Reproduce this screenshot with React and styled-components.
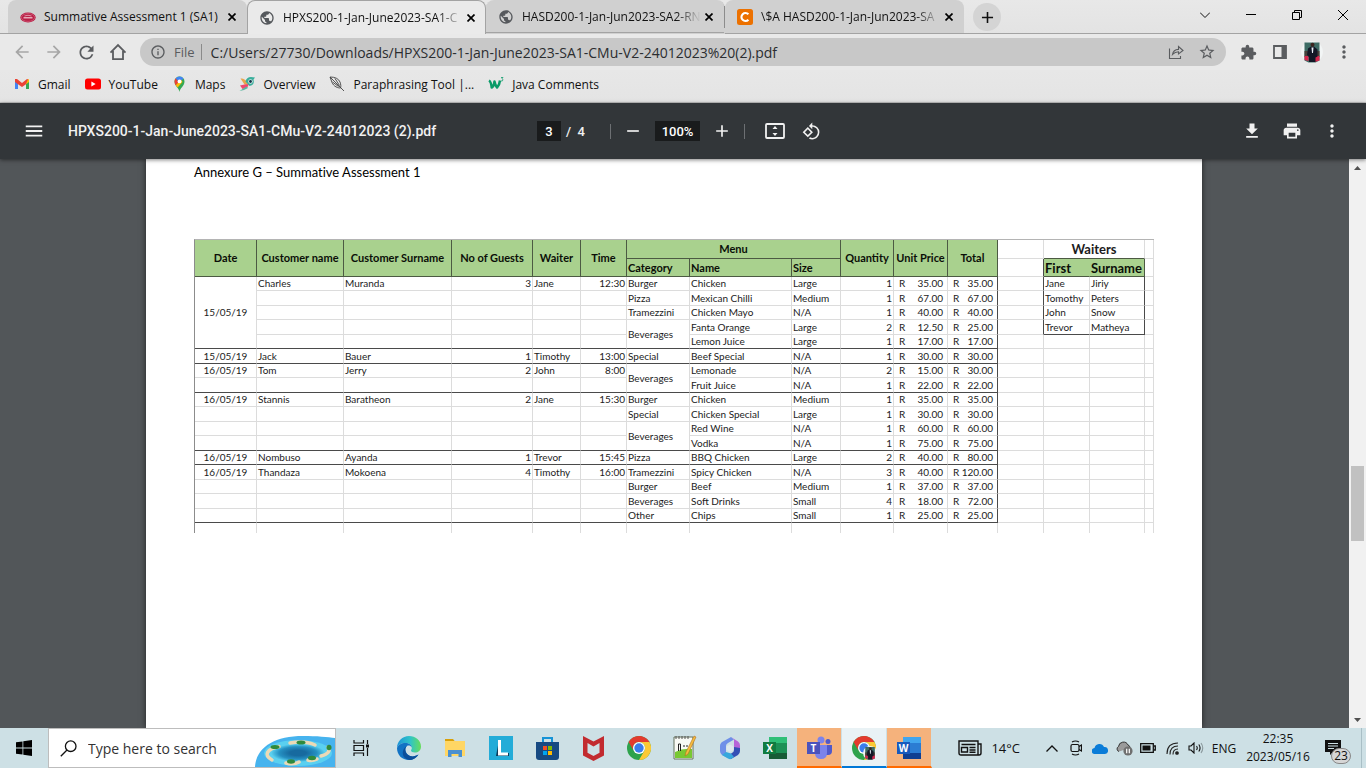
import React from 'react';
import styled, { createGlobalStyle, css } from 'styled-components';
import {
  MdAdd,
  MdArrowBack,
  MdArrowForward,
  MdExtension,
  MdFileDownload,
  MdInfoOutline,
  MdMenu,
  MdMoreVert,
  MdPrint,
  MdPublic,
  MdRefresh,
  MdRemove,
  MdRotate90DegreesCcw,
  MdStarBorder,
} from 'react-icons/md';

const GlobalStyle = createGlobalStyle`
  * {
    box-sizing: border-box;
  }

  body {
    margin: 0;
    font-family: "Open Sans", "Noto Sans", sans-serif;
    font-size: 12px;
    color: #111;
  }

  button {
    border: 0;
    padding: 0;
    background: none;
    color: inherit;
    font: inherit;
  }

  a {
    color: inherit;
    text-decoration: none;
  }

  svg {
    display: block;
    flex-shrink: 0;
  }
`;

const Desktop = styled.div`
  display: flex;
  flex-direction: column;
  height: 100vh;
  overflow: hidden;
`;

/* ---------- browser ---------- */

const TabStrip = styled.div`
  display: flex;
  height: 34px;
  padding-left: 8px;
  background: linear-gradient(#e8e8e8, #e3e3e3);
  box-shadow: inset 0 -1px 0 #a3a3a3;
`;

const Tab = styled.div`
  display: flex;
  align-items: center;
  flex: 0 1 239px;
  min-width: 0;
  height: 34px;
  padding: 0 7px 0 12px;
  background: #d0d0d0;
  border-bottom: 1px solid #a3a3a3;
  border-radius: 8px 8px 0 0;

  ${props => props.$divider && css`
    border-right: 1px solid #8c8c8c;
    border-image: linear-gradient(transparent 20%, #8c8c8c 20%, #8c8c8c 80%, transparent 80%) 1;
    border-image-width: 0 1px 0 0;
    box-shadow: inset 0 -1px 0 #a3a3a3;
  `}

  ${props => props.$active && css`
    padding: 0 6px 0 11px;
    background: #eaeaea;
    border: 1px solid #a3a3a3;
    border-bottom: 0;
  `}
`;

const TabTitle = styled.span`
  flex: 1;
  margin-left: 8px;
  white-space: nowrap;
  mask-image: ${props => (props.$fade ? 'linear-gradient(to right, #000 86%, transparent 100%)' : 'none')};
`;

const TabClose = styled.button`
  display: flex;
  align-items: center;
  justify-content: center;
  width: 16px;
  height: 16px;
`;

const NewTab = styled.button`
  display: flex;
  align-items: center;
  justify-content: center;
  width: 28px;
  height: 28px;
  margin: 3px 0 0 9px;
  border-radius: 50%;
  background: #d4d4d4;
`;

const WindowControls = styled.div`
  display: flex;
  margin-left: auto;
`;

const WindowButton = styled.button`
  display: flex;
  align-items: center;
  justify-content: center;
  width: 46px;
  height: 29px;
`;

const NavBar = styled.div`
  display: flex;
  align-items: center;
  height: 36px;
  padding: 0 6px;
  background: #e9e9e9;
`;

const NavButton = styled.button`
  display: flex;
  align-items: center;
  justify-content: center;
  width: 32px;
  height: 32px;
  color: ${props => (props.disabled ? '#a6a6a6' : '#5a5c5f')};
`;

const AddressBar = styled.div`
  display: flex;
  align-items: center;
  flex: 1;
  height: 28px;
  margin: 0 6px;
  padding: 0 10px;
  border-radius: 14px;
  background: #c8c8c8;
  color: #5a5c5f;
  font-size: 14px;
`;

const Scheme = styled.span`
  margin-left: 8px;
  padding-right: 6px;
  border-right: 1px solid #8a8a8a;
  font-size: 13px;
  line-height: 16px;
`;

const AddressInput = styled.input`
  flex: 1;
  border: 0;
  padding: 0 9px;
  outline: 0;
  background: none;
  color: #2b2d30;
  font: inherit;
`;

const AddressButton = styled.button`
  display: flex;
  margin-left: 14px;
`;

const Bookmarks = styled.nav`
  display: flex;
  align-items: center;
  gap: 14px;
  height: 33px;
  padding: 0 14px 4px;
  background: linear-gradient(#e7e7e7, #e4e4e4);
  border-bottom: 1px solid #c4c4c4;
`;

const Bookmark = styled.a`
  display: flex;
  align-items: center;
  gap: 8px;
  white-space: nowrap;
`;

/* ---------- pdf viewer ---------- */

const PdfToolbar = styled.div`
  position: relative;
  z-index: 1;
  display: grid;
  grid-template-columns: 1fr auto 1fr;
  align-items: center;
  height: 56px;
  background: #323639;
  color: #f1f1f1;
  box-shadow: 0 1px 4px rgba(0, 0, 0, 0.5);
  font-family: Roboto, sans-serif;
  font-size: 14px;
  font-weight: 500;
`;

const ToolbarStart = styled.div`
  display: flex;
  align-items: center;
  gap: 22px;
  padding-left: 22px;
`;

const ToolbarCenter = styled.div`
  display: flex;
  align-items: center;
`;

const ToolbarEnd = styled.div`
  display: flex;
  justify-content: flex-end;
  gap: 16px;
  padding-right: 22px;
`;

const PdfTitle = styled.span`
  white-space: nowrap;
`;

const ToolButton = styled.button`
  display: flex;
  align-items: center;
  justify-content: center;
  width: 24px;
  height: 24px;
`;

const ToolInput = styled.input`
  width: ${props => (props.$wide ? '45px' : '24px')};
  height: 20px;
  border: 0;
  padding: 0;
  background: #191b1c;
  color: #fff;
  font: inherit;
  font-size: 13px;
  text-align: center;
`;

const PageCount = styled.span`
  width: 49px;
  padding-left: 5px;
  font-size: 13px;
  white-space: pre;
`;

const ToolDivider = styled.span`
  width: 1px;
  height: 15px;
  background: #6d7073;
`;

const ToolGroup = styled.div`
  display: flex;
  align-items: center;
  gap: 10px;
  padding: 0 10px;
`;

const ViewGroup = styled(ToolGroup)`
  gap: 12px;
  padding: 0 6px 0 18px;
`;

const Viewer = styled.main`
  display: flex;
  flex: 1;
  min-height: 0;
  background: #525659;
`;

const PageArea = styled.div`
  display: flex;
  justify-content: center;
  flex: 1;
  min-width: 0;
  padding-right: 1px;
`;

const PdfPage = styled.article`
  flex: 0 1 1056px;
  padding: 4px 48px 0;
  background: #fff;
  box-shadow: 0 0 6px rgba(0, 0, 0, 0.6);
`;

const PageHeading = styled.h1`
  margin: 0 0 58px;
  font: 400 13px/18px Lato, sans-serif;
  font-variant-ligatures: none;
  color: #000;
`;

const ScrollRail = styled.div`
  display: flex;
  flex-direction: column;
  width: 17px;
  background: #f1f1f1;
`;

const ScrollArrow = styled.button`
  display: flex;
  align-items: center;
  justify-content: center;
  height: 17px;
  color: #505050;
`;

const ScrollSpace = styled.div`
  flex: ${props => props.$grow};
`;

const ScrollThumb = styled.div`
  flex: 75;
  margin: 0 2px;
  background: #c1c1c1;
`;

/* ---------- spreadsheet ---------- */

const Sheet = styled.table`
  width: 100%;
  table-layout: fixed;
  border-collapse: separate;
  border-spacing: 0;
  border-top: 1px solid #b4b4b4;
  border-left: 1px solid #8c8c8c;
  font: 400 10px/12px Lato, sans-serif;
  color: #1c1c1c;
`;

const HeadRow = styled.tr`
  height: ${props => (props.$first ? '19px' : '18px')};
`;

const Row = styled.tr`
  height: 14px;

  &:nth-child(even) {
    height: 15px;
  }

  &:last-child {
    height: 10px;
  }
`;

const HeadCell = styled.th`
  padding: 0 1px;
  background: #a9d18e;
  border-right: 1px solid ${props => (props.$open ? '#a9d18e' : '#4c5a43')};
  border-bottom: 1px solid #4c5a43;
  color: #0b0f08;
  font-size: ${props => (props.$large ? '13px' : '11px')};
  text-align: ${props => props.$align || 'center'};
  white-space: nowrap;
`;

const WaitersTitle = styled.th`
  padding: 0;
  border-bottom: 1px solid #4c5a43;
  border-right: 1px solid #dcdcdc;
  font-size: 13px;
`;

const Cell = styled.td`
  padding: 0 1px 1px;
  border-right: 1px solid ${props => (props.$edge ? '#4a4a4a' : '#dcdcdc')};
  border-bottom: 1px solid ${props => (props.$end ? '#4a4a4a' : '#dcdcdc')};
  text-align: ${props => props.$align || 'left'};
  white-space: nowrap;
`;

const FooterCell = styled(Cell)`
  border-bottom: 0;
`;

const Money = styled.span`
  display: flex;
  justify-content: space-between;
  padding: 0 3px 0 4px;
`;

/* ---------- taskbar ---------- */

const Taskbar = styled.footer`
  display: flex;
  align-items: stretch;
  height: 40px;
  background: #cde0e5;
`;

const StartButton = styled.button`
  display: flex;
  align-items: center;
  justify-content: center;
  width: 48px;
`;

const Search = styled.label`
  display: flex;
  align-items: center;
  gap: 11px;
  width: 288px;
  padding-left: 11px;
  border: 1px solid #bdbdbd;
  background: #fff;
`;

const SearchInput = styled.input`
  flex: 1;
  min-width: 0;
  border: 0;
  padding: 0;
  outline: 0;
  background: none;
  font: inherit;
  font-size: 14px;

  &::placeholder {
    color: #333;
    opacity: 1;
  }
`;

const IslandBox = styled.span`
  align-self: flex-end;
`;

const TaskButton = styled.button`
  display: flex;
  align-items: center;
  justify-content: center;
  width: ${props => props.$width || 46}px;
  border-bottom: 3px solid transparent;
  border-top: 3px solid transparent;

  ${props => props.$state && css`
    border: 0;
    border-right: 1px solid #cde0e5;
    padding-top: 2px;
    background: ${props.$state === 'alert' ? '#f5b27c' : '#e9f2f5'};
    border-bottom: 2px solid ${props.$state === 'alert' ? '#ff6a00' : '#0078d7'};
  `}
`;

const Tray = styled.div`
  display: flex;
  align-items: center;
  margin-left: auto;
`;

const TrayButton = styled.button`
  display: flex;
  align-items: center;
  justify-content: center;
  width: ${props => props.$width || 24}px;
  height: 40px;
`;

const Weather = styled(TrayButton)`
  gap: 9px;
  width: auto;
  margin-right: 20px;
  font-size: 13px;
`;

const Clock = styled.time`
  width: 76px;
  line-height: 18px;
  text-align: center;
`;

const NoticeButton = styled.button`
  position: relative;
  display: flex;
  align-items: center;
  width: 46px;
  height: 40px;
  margin-right: 4px;
  padding-left: 9px;
  border-right: 1px solid #a9bfc6;
`;

const NoticeCount = styled.span`
  position: absolute;
  right: 10px;
  bottom: 4px;
  width: 20px;
  height: 16px;
  border: 1px solid #888;
  border-radius: 8px;
  background: #d6d6d6;
  font-size: 12px;
  line-height: 14px;
  text-align: center;
`;

/* ---------- drawings ---------- */

const CloseIcon = () => (
  <svg width="8" height="8" viewBox="0 0 8 8" fill="none" stroke="#000" strokeWidth="1.7">
    <path d="m.5.500 7 7M7.500.500l-7 7" />
  </svg>
);

const Crest = () => (
  <svg width="16" height="16" viewBox="0 0 16 16">
    <ellipse cx="8" cy="8.500" rx="7.700" ry="4.900" fill="#b81e45" />
    <ellipse cx="8" cy="8.500" rx="6.600" ry="3.900" fill="none" stroke="#d6708a" strokeWidth=".6" />
    <path d="M4.500 7q3.500-1.500 7 0" fill="none" stroke="#e8b5c1" strokeWidth=".8" />
    <path d="M3.500 8.800h9" stroke="#f3ccd5" strokeWidth="1.200" />
  </svg>
);

const OrangeC = () => (
  <svg width="16" height="16" viewBox="0 0 16 16">
    <rect width="16" height="16" rx="2.500" fill="#ec7100" />
    <path d="M11.400 5.300A4 4 0 1 0 11.400 10.700" fill="none" stroke="#fff" strokeWidth="2.100" />
  </svg>
);

const HomeIcon = () => (
  <svg width="18" height="18" viewBox="0 0 18 18" fill="none" stroke="currentColor" strokeWidth="1.800">
    <path d="M1.500 9.600 9 2l7.500 7.600M4 8v8.100h10V8" />
  </svg>
);

const ShareIcon = () => (
  <svg width="16" height="16" viewBox="0 0 16 16" fill="none" stroke="currentColor" strokeWidth="1.100">
    <path d="M1.500 4.500V14.500H12.500V12M4.500 10.500C5 7.500 7 5.500 10.500 5.400V2.500L15 6.500 10.500 10V7.700C7.800 7.700 6 8.800 4.500 10.500Z" />
  </svg>
);

const SidePanelIcon = () => (
  <svg width="14" height="14" viewBox="0 0 14 14">
    <path d="M1 1h12v12H1z" fill="none" stroke="currentColor" strokeWidth="1.800" />
    <path d="M8.500 1H13v12H8.500z" fill="currentColor" />
  </svg>
);

const Avatar = ({ size = 22 }) => (
  <svg width={size} height={size} viewBox="0 0 22 22">
    <circle cx="11" cy="11" r="10.900" fill="#f2f5f5" />
    <path d="M3.500 1.500h15v18l-4 2h-7l-4-2z" fill="#3d6b64" />
    <path d="M3.500 10h15v6h-15z" fill="#47413a" />
    <path d="M3.500 15h4v5l-4-1zM14 15h4.500v4.500L14 21z" fill="#d6274e" />
    <path d="M7 7.500 10 5.500h3l3.500 3v7l-2 1V21H8v-5l-2-2z" fill="#131826" />
    <circle cx="11.500" cy="3.800" r="2" fill="#3c2520" />
    <path d="M10.500 6.500h2l-.5 5.500h-1z" fill="#e8edf5" />
  </svg>
);

const GmailIcon = () => (
  <svg width="16" height="16" viewBox="0 0 16 16">
    <path d="M1 4v9h3V6z" fill="#4285f4" />
    <path d="M12 6v7h3V4z" fill="#34a853" />
    <path d="M12 4.500 15 3v3l-3 2.200z" fill="#fbbc04" />
    <path d="M1 3h2l5 4 5-4 1 0-2 5.200L8 11 4 8.200 1 6z" fill="#ea4335" />
  </svg>
);

const YouTubeIcon = () => (
  <svg width="16" height="16" viewBox="0 0 16 16">
    <rect y="2.500" width="16" height="11" rx="2.500" fill="#f00" />
    <path d="M6.400 5.500v5l4.200-2.500z" fill="#fff" />
  </svg>
);

const MapsIcon = () => (
  <svg width="15" height="16" viewBox="0 0 15 16">
    <path d="M7.500 16C7 12 2.500 10 2.500 5.500a5 5 0 0 1 10 0C12.500 10 8 12 7.500 16z" fill="#34a853" />
    <path d="M3.700 2.300 7 5.800 4 9.500A6 6 0 0 1 2.500 5.500c0-1.200.4-2.300 1.200-3.200z" fill="#ea4335" />
    <path d="M3.700 2.300A5 5 0 0 1 11.500 2.500L7.500 7z" fill="#4285f4" />
    <path d="M3.800 9.300 9 3.500 10.500 6 5.600 11.600z" fill="#fbbc04" />
    <circle cx="7.500" cy="5.400" r="1.900" fill="#fff" />
  </svg>
);

const BirdIcon = () => (
  <svg width="16" height="16" viewBox="0 0 16 16">
    <path d="M1.500 2.500C5 2.500 8 4 9 9L5.500 8.500z" fill="#e9a64c" />
    <path d="M1 9.500c3-1 6-1.500 9-1.500l-2 4-4.500 1z" fill="#ef476f" />
    <path d="M6.500 5.500Q7.500 1 12 1l4 .5-1.500 2Q16 9 10.500 10z" fill="#3aaf9c" />
    <circle cx="11.500" cy="5.500" r="2.200" fill="#dfe9ec" />
    <circle cx="11.500" cy="5.500" r="1.400" fill="#14364a" />
    <path d="m.5 15 7-4.500 1.500 1.500-4 2z" fill="#57b8a0" />
  </svg>
);

const QuillIcon = () => (
  <svg width="16" height="16" viewBox="0 0 16 16" fill="none" stroke="#444" strokeWidth=".9">
    <path d="M1 1c5 0 8.500 1.500 10 5 1 2.500 1 5 .5 6C7 12 3.500 9 2.500 5zM1 1l14 14M6 2.500l4.500 7M3.500 6l6 4.500" />
  </svg>
);

const W3Icon = () => (
  <svg width="16" height="16" viewBox="0 0 16 16">
    <path d="M1 4.500q2 1 2.700 7 2.200-1 2.800-6 .8 4 2.500 6 2.500-2.500 3-7" fill="none" stroke="#0a9b68" strokeWidth="2.500" strokeLinejoin="round" />
    <path d="M13 1.500h2L14 2.800Q15.500 3.600 14.500 4.800 13.600 5.300 13 4.600" fill="none" stroke="#0a9b68" strokeWidth=".8" />
  </svg>
);

const FitPageIcon = () => (
  <svg width="20" height="16" viewBox="0 0 20 16">
    <rect x="1" y="1" width="18" height="14" rx="1" fill="none" stroke="currentColor" strokeWidth="1.800" />
    <path d="m10 3-2.500 3h5zM10 13l-2.500-3h5z" fill="currentColor" />
  </svg>
);

const Triangle = ({ down }) => (
  <svg width="7" height="4" viewBox="0 0 7 4">
    <path d={down ? 'M0 0h7L3.500 4z' : 'M0 4h7L3.500 0z'} fill="currentColor" />
  </svg>
);

const WindowsLogo = () => (
  <svg width="16" height="16" viewBox="0 0 16 16">
    <path d="M0 2.300 6.500 1.400V7.600H0zM7.300 1.300 16 0v7.600H7.300zM0 8.400h6.500v6.200L0 13.700zM7.300 8.400H16V16l-8.700-1.300z" />
  </svg>
);

const SearchIcon = () => (
  <svg width="17" height="17" viewBox="0 0 17 17" fill="none" stroke="#111" strokeWidth="1.300">
    <circle cx="10.700" cy="6.200" r="5.300" />
    <path d="M7 10 .8 16.200" />
  </svg>
);

const Island = () => (
  <svg width="80" height="31" viewBox="0 0 80 31">
    <defs>
      <radialGradient id="lagoon">
        <stop offset="0.300" stopColor="#176a9f" />
        <stop offset="0.700" stopColor="#2590c2" />
        <stop offset="1" stopColor="#5ad0f0" />
      </radialGradient>
    </defs>
    <path d="M0 31C1 11 20 0 48 0c14 0 25 1 32 2v29z" fill="#46b3ee" />
    <ellipse cx="43" cy="17" rx="34" ry="13" fill="#5ad0f0" />
    <ellipse cx="43" cy="17" rx="27" ry="9" fill="url(#lagoon)" />
    <g fill="none" stroke="#ecd9b6" strokeWidth="3.500" strokeLinecap="round">
      <path d="M24 10.500C12 13 8 19 17 24" />
      <path d="M35 7q15-2.500 25 2" />
      <path d="M73 11q4 6-7 9" />
      <path d="M31 27q8 2 13-1" />
      <path d="M53 24q4 1.500 9-1" />
    </g>
    <g fill="#2f8a3d">
      <ellipse cx="20" cy="11" rx="4.500" ry="2" />
      <ellipse cx="46" cy="6.500" rx="4.500" ry="2" />
      <ellipse cx="74" cy="11.500" rx="2.500" ry="2.800" />
      <ellipse cx="36" cy="25.500" rx="4" ry="2.200" />
      <ellipse cx="57" cy="22" rx="4" ry="2.200" />
    </g>
  </svg>
);

const TaskViewIcon = () => (
  <svg width="17" height="16" viewBox="0 0 17 16" fill="none" stroke="#111" strokeWidth="1.200">
    <path d="M1 0v3h9.500V0M1 16v-3h9.500v3M1 5.500h9.500v5H1zM14.500 0v4M14.500 8v8" />
    <path d="M13 4.500h3v3h-3z" fill="#111" stroke="none" />
  </svg>
);

const EdgeIcon = () => (
  <svg width="24" height="24" viewBox="0 0 24 24">
    <defs>
      <linearGradient id="edgeTop" x1="0" x2="1">
        <stop offset="0" stopColor="#1c93d8" />
        <stop offset="0.550" stopColor="#2fc4c8" />
        <stop offset="1" stopColor="#67dd5b" />
      </linearGradient>
    </defs>
    <path d="M0 12C0 5 5.500 0 12 0s12 4.500 12 10.500c0 4-3 6-6 6-2.500 0-4-1-4-2 0-.8.800-1 .800-2.500C14.800 9 12 7 8.500 7 4 7 1 9 0 12z" fill="url(#edgeTop)" />
    <path d="M0 12c1-3 4-5 8.500-5 3.500 0 6 2 6.300 4.500C13.500 9.500 11.500 9 10 10c-3 2-2 8 3 10 3 1 6 0 8.500-1.500C19 22.500 15 24 12 24 5 24 0 19 0 12z" fill="#1273c4" />
    <path d="M10 10c-3 2-2 8 3 10 3 1 6 0 8.500-1.500C19.500 22 16 24 12.500 24 7 23 5 19 6 15c.500-2 2-4.500 4-5z" fill="#0b4f9b" />
  </svg>
);

const FolderIcon = () => (
  <svg width="22" height="20" viewBox="0 0 22 20">
    <path d="M1 1h8l2 2.500H1z" fill="#d9a009" />
    <path d="M1 3h20v15H1z" fill="#ffd664" />
    <path d="M4 12h14v7h-3.500v-3h-7v3H4z" fill="#4a90d0" />
  </svg>
);

const LIcon = () => (
  <svg width="24" height="24" viewBox="0 0 24 24">
    <path d="M0 0h24v24H0z" fill="#23acd8" />
    <path d="M7 20 10 4v13h10v3z" fill="#0b3b5a" />
    <path d="M10.500 4v14h8.500" fill="none" stroke="#fff" strokeWidth="3" />
  </svg>
);

const StoreIcon = () => (
  <svg width="23" height="25" viewBox="0 0 23 25">
    <path d="M7 7V2h9v5" fill="none" stroke="#1793d6" strokeWidth="2" />
    <path d="M0 6h23v15q0 3-3 3H3q-3 0-3-3z" fill="#174a82" />
    <path d="M7 10h4v4H7z" fill="#f25022" />
    <path d="M12 10h4v4h-4z" fill="#7fba00" />
    <path d="M7 15h4v4H7z" fill="#00a4ef" />
    <path d="M12 15h4v4h-4z" fill="#ffb900" />
  </svg>
);

const ShieldIcon = () => (
  <svg width="21" height="25" viewBox="0 0 21 25">
    <path d="M0 0 10.500 5.500 21 0v19.500L10.500 25 0 19.500zM4.500 7v9.800l6 3.200 6-3.200V7l-6 3.500z" fill="#c22b2f" fillRule="evenodd" />
  </svg>
);

const ChromeIcon = ({ children }) => (
  <svg width="24" height="24" viewBox="0 0 24 24">
    <circle cx="12" cy="12" r="12" fill="#2ea24c" />
    <path d="M12 0c4.500 0 8.300 2.400 10.400 6H12a6 6 0 0 0-5.200 9L1.600 6A12 12 0 0 1 12 0z" fill="#e33b2e" />
    <path d="M22.400 6A12 12 0 0 1 12 24l5.200-9A6 6 0 0 0 12 6z" fill="#fcc934" />
    <circle cx="12" cy="12" r="6" fill="#fff" />
    <circle cx="12" cy="12" r="4.700" fill="#3b7ded" />
    {children}
  </svg>
);

const NotepadIcon = () => (
  <svg width="24" height="26" viewBox="0 0 24 26">
    <path d="M1 2h19v22H1z" fill="#f7f9f4" stroke="#65735c" />
    <path d="M2 17q8-4 17-3v9H2z" fill="#78c832" />
    <path d="M3 1v3m3-3v3m3-3v3m3-3v3m3-3v3" stroke="#555" />
    <path d="M5.500 16V9h2v7M10 11h2M13 11h2" fill="none" stroke="#222" />
    <path d="m21 1 2 1-8 17-3 2 1-4z" fill="#f5bd3f" stroke="#b06d20" strokeWidth=".6" />
  </svg>
);

const Office365Icon = () => (
  <svg width="22" height="24" viewBox="0 0 22 24">
    <path d="M12 1 4 5.500Q1 7 1 10v5q0 2.500 2 4l4 2V10q0-2 2-3l6-3.500z" fill="#6e8fe8" />
    <path d="m12 1 7 4.500q2 1.500 2 4V15l-6-3.500V3.500z" fill="#b765d8" />
    <path d="M21 12v3q0 2.500-2 4l-7 4-5-2.500 6-3.500q2-1 2-3v-3z" fill="#3550b5" />
    <path d="m3 19 4-3 5 1.500 3 3.500-3 2q-2 .5-4-1z" fill="#38a7dc" />
    <path d="M11 8.500 14.500 10.500v3.500L11 16l-3.500-2v-3.500z" fill="#dde8ee" />
  </svg>
);

const OfficeTile = ({ letter, colors }) => (
  <svg width="24" height="24" viewBox="0 0 24 24">
    <path d="M6 1h18v22H6z" fill={colors[1]} />
    <path d="M6 1h18v6H6z" fill={colors[0]} />
    <path d="M6 17h18v6H6z" fill={colors[2]} />
    <path d="M0 6h13v12H0z" fill={colors[3]} />
    <text x="6.500" y="15.500" fill="#fff" fontFamily="Open Sans, sans-serif" fontSize="10" fontWeight="700" textAnchor="middle">
      {letter}
    </text>
  </svg>
);

const TeamsIcon = () => (
  <svg width="25" height="24" viewBox="0 0 25 24">
    <circle cx="14" cy="4" r="3.500" fill="#7b83eb" />
    <circle cx="21" cy="5.500" r="2.500" fill="#5059c9" />
    <path d="M17 9h8v6q0 4-4 4h-4z" fill="#5059c9" />
    <path d="M8 9h12v8q0 6-6 6t-6-6z" fill="#7b83eb" />
    <path d="M0 6h13v12H0z" fill="#4b53bc" />
    <text x="6.500" y="15.500" fill="#fff" fontFamily="Open Sans, sans-serif" fontSize="10" fontWeight="700" textAnchor="middle">
      T
    </text>
  </svg>
);

const NewsIcon = () => (
  <svg width="24" height="16" viewBox="0 0 24 16" fill="none" stroke="#111" strokeWidth="1.400">
    <path d="M1 1h19v14H3q-2 0-2-2zM20 4h3v9q0 2-2 2h-1M3.500 4.500h14M3.500 7.500h6v4.500h-6zM11.500 7.500h6M11.500 10h6M11.500 12.300h6" />
  </svg>
);

const TrayUp = () => (
  <svg width="12" height="7" viewBox="0 0 12 7" fill="none" stroke="#111" strokeWidth="1.300">
    <path d="m.5 6.500 5.500-5.500 5.500 5.500" />
  </svg>
);

const MeetIcon = () => (
  <svg width="12" height="16" viewBox="0 0 12 16" fill="none" stroke="#111" strokeWidth="1.200">
    <path d="M2 2q3.500-2 7 0M2 14q3.500 2 7 0M9 6.500l2.500-1.500v6L9 9.500" />
    <rect x="1" y="4.500" width="8" height="7" rx="1.500" />
  </svg>
);

const CloudIcon = () => (
  <svg width="16" height="11" viewBox="0 0 16 11">
    <path d="M3 11a3 3 0 0 1-.5-6A5 5 0 0 1 12 4a3.500 3.500 0 0 1 1 7z" fill="#0a7cd8" />
  </svg>
);

const CloudPausedIcon = () => (
  <svg width="17" height="15" viewBox="0 0 17 15">
    <path d="M3 10.500a2.700 2.700 0 0 1-.5-5A5 5 0 0 1 12 4a3 3 0 0 1 2 3" fill="#9a9a9a" stroke="#333" />
    <circle cx="12" cy="10" r="4.600" fill="#6f6f6f" />
    <path d="M10.700 7.800v4.400M13.300 7.800v4.400" stroke="#fff" strokeWidth="1.200" />
  </svg>
);

const BatteryIcon = () => (
  <svg width="16" height="10" viewBox="0 0 16 10">
    <path d="M.7.700h12.600v8.600H.7zM14 3h1.300v4H14" fill="none" stroke="#111" strokeWidth="1.300" />
    <path d="M2.500 2.500h8v5h-8z" fill="#111" />
  </svg>
);

const WifiIcon = () => (
  <svg width="13" height="13" viewBox="0 0 13 13" fill="none" stroke="#222" strokeWidth="1.100">
    <path d="M1 12Q1 1 12 1M4 12.500Q4 4 12 4M7 12.500Q7 7 12 7" />
    <circle cx="11" cy="11" r="1.300" fill="#222" />
  </svg>
);

const SpeakerIcon = () => (
  <svg width="16" height="12" viewBox="0 0 16 12" fill="none" stroke="#111" strokeWidth="1.100">
    <path d="M1 4h2l3-3v10L3 8H1zM8.500 4q1.500 2 0 4M10.800 2.500q2.500 3.500 0 7" />
    <path d="M13 1q3.500 5 0 10" stroke="#8b999d" />
  </svg>
);

const NoticeIcon = () => (
  <svg width="16" height="16" viewBox="0 0 16 16">
    <path d="M0 0h16v12H8l-3 3v-3H0z" fill="#111" />
    <path d="M3 3.500h10M3 6h10M3 8.500h6" stroke="#cde0e5" />
  </svg>
);

/* ---------- data ---------- */

const tabs = [
  { title: 'Summative Assessment 1 (SA1)', icon: <Crest /> },
  { title: 'HPXS200-1-Jan-June2023-SA1-C', icon: <MdPublic size={16} color="#55585c" />, active: true, fade: true },
  { title: 'HASD200-1-Jan-Jun2023-SA2-RN', icon: <MdPublic size={16} color="#55585c" />, fade: true, divider: true },
  { title: '\\$A HASD200-1-Jan-Jun2023-SA', icon: <OrangeC />, fade: true },
];

const bookmarks = [
  { label: 'Gmail', icon: <GmailIcon /> },
  { label: 'YouTube', icon: <YouTubeIcon /> },
  { label: 'Maps', icon: <MapsIcon /> },
  { label: 'Overview', icon: <BirdIcon /> },
  { label: 'Paraphrasing Tool |...', icon: <QuillIcon /> },
  { label: 'Java Comments', icon: <W3Icon /> },
];

const columnWidths = [62, 87, 108, 81, 48, 46, 63, 102, 49, 53, 54, 50, 46, 46, 55, 9];

const headings = ['Date', 'Customer name', 'Customer Surname', 'No of Guests', 'Waiter', 'Time'];

const orders = [
  {
    date: '15/05/19',
    span: true,
    customer: ['Charles', 'Muranda', '3', 'Jane', '12:30'],
    items: [
      ['Burger', 'Chicken', 'Large', '1', '35.00', '35.00'],
      ['Pizza', 'Mexican Chilli', 'Medium', '1', '67.00', '67.00'],
      ['Tramezzini', 'Chicken Mayo', 'N/A', '1', '40.00', '40.00'],
      ['Beverages', 'Fanta Orange', 'Large', '2', '12.50', '25.00'],
      [null, 'Lemon Juice', 'Large', '1', '17.00', '17.00'],
    ],
  },
  {
    date: '15/05/19',
    customer: ['Jack', 'Bauer', '1', 'Timothy', '13:00'],
    items: [['Special', 'Beef Special', 'N/A', '1', '30.00', '30.00']],
  },
  {
    date: '16/05/19',
    customer: ['Tom', 'Jerry', '2', 'John', '8:00'],
    items: [
      ['Beverages', 'Lemonade', 'N/A', '2', '15.00', '30.00'],
      [null, 'Fruit Juice', 'N/A', '1', '22.00', '22.00'],
    ],
  },
  {
    date: '16/05/19',
    customer: ['Stannis', 'Baratheon', '2', 'Jane', '15:30'],
    items: [
      ['Burger', 'Chicken', 'Medium', '1', '35.00', '35.00'],
      ['Special', 'Chicken Special', 'Large', '1', '30.00', '30.00'],
      ['Beverages', 'Red Wine', 'N/A', '1', '60.00', '60.00'],
      [null, 'Vodka', 'N/A', '1', '75.00', '75.00'],
    ],
  },
  {
    date: '16/05/19',
    customer: ['Nombuso', 'Ayanda', '1', 'Trevor', '15:45'],
    items: [['Pizza', 'BBQ Chicken', 'Large', '2', '40.00', '80.00']],
  },
  {
    date: '16/05/19',
    customer: ['Thandaza', 'Mokoena', '4', 'Timothy', '16:00'],
    items: [
      ['Tramezzini', 'Spicy Chicken', 'N/A', '3', '40.00', '120.00'],
      ['Burger', 'Beef', 'Medium', '1', '37.00', '37.00'],
      ['Beverages', 'Soft Drinks', 'Small', '4', '18.00', '72.00'],
      ['Other', 'Chips', 'Small', '1', '25.00', '25.00'],
    ],
  },
];

const waiters = [
  ['Jane', 'Jiriy'],
  ['Tomothy', 'Peters'],
  ['John', 'Snow'],
  ['Trevor', 'Matheya'],
];

const customerAlign = ['left', 'left', 'right', 'left', 'right'];

const pinnedApps = [
  { name: 'Microsoft Edge', icon: <EdgeIcon /> },
  { name: 'File Explorer', icon: <FolderIcon /> },
  { name: 'L', icon: <LIcon /> },
  { name: 'Microsoft Store', icon: <StoreIcon /> },
  { name: 'McAfee', icon: <ShieldIcon /> },
  { name: 'Google Chrome', icon: <ChromeIcon /> },
];

const otherApps = [
  { name: 'Notepad++', icon: <NotepadIcon /> },
  { name: 'Microsoft 365', icon: <Office365Icon /> },
  { name: 'Excel', icon: <OfficeTile letter="X" colors={['#2fbf77', '#1d9156', '#185c37', '#107c41']} /> },
  { name: 'Teams', icon: <TeamsIcon />, state: 'alert' },
  {
    name: 'Google Chrome window',
    icon: (
      <ChromeIcon>
        <g transform="translate(11 10) scale(.64)">
          <Avatar />
        </g>
      </ChromeIcon>
    ),
    state: 'open',
  },
  { name: 'Word', icon: <OfficeTile letter="W" colors={['#41a5ee', '#2b7cd3', '#103f91', '#185abd']} />, state: 'alert' },
];

const OrderTable = () => {
  const rows = orders.flatMap(order =>
    order.items.map((item, i) => ({ order, item, first: i === 0, last: i === order.items.length - 1, i }))
  );

  return (
    <Sheet>
      <colgroup>
        {columnWidths.map((width, i) => (
          <col key={i} width={width} />
        ))}
      </colgroup>
      <thead>
        <HeadRow $first>
          {headings.map(heading => (
            <HeadCell key={heading} rowSpan={2}>{heading}</HeadCell>
          ))}
          <HeadCell colSpan={3}>Menu</HeadCell>
          <HeadCell rowSpan={2}>Quantity</HeadCell>
          <HeadCell rowSpan={2}>Unit Price</HeadCell>
          <HeadCell rowSpan={2}>Total</HeadCell>
          <Cell />
          <WaitersTitle colSpan={2}>Waiters</WaitersTitle>
          <Cell />
        </HeadRow>
        <HeadRow>
          <HeadCell $align="left">Category</HeadCell>
          <HeadCell $align="left">Name</HeadCell>
          <HeadCell $align="left">Size</HeadCell>
          <Cell $edge />
          <HeadCell $align="left" $large $open>First</HeadCell>
          <HeadCell $align="left" $large>Surname</HeadCell>
          <Cell />
        </HeadRow>
      </thead>
      <tbody>
        {rows.map(({ order, item, first, last, i }, index) => {
          const waiter = waiters[index];
          const [category, name, size, quantity, price, total] = item;
          const spansTwo = order.items[i + 1] && order.items[i + 1][0] === null;
          const categoryEnd = last || (spansTwo && i + 2 === order.items.length);
          return (
            <Row key={index}>
              {(first || !order.span) && (
                <Cell $align="center" rowSpan={order.span ? order.items.length : 1} $end={last || order.span}>
                  {first && order.date}
                </Cell>
              )}
              {order.customer.map((value, col) => (
                <Cell key={col} $align={customerAlign[col]} $end={last}>{first && value}</Cell>
              ))}
              {category && <Cell rowSpan={spansTwo ? 2 : 1} $end={categoryEnd}>{category}</Cell>}
              <Cell $end={last}>{name}</Cell>
              <Cell $end={last}>{size}</Cell>
              <Cell $align="right" $end={last}>{quantity}</Cell>
              <Cell $end={last}><Money><span>R</span><span>{price}</span></Money></Cell>
              <Cell $end={last} $edge><Money><span>R</span><span>{total}</span></Money></Cell>
              <Cell $edge={!!waiter} />
              <Cell $end={index === waiters.length - 1}>{waiter && waiter[0]}</Cell>
              <Cell $edge={!!waiter} $end={index === waiters.length - 1}>{waiter && waiter[1]}</Cell>
              <Cell />
            </Row>
          );
        })}
        <Row>
          {columnWidths.map((width, i) => (
            <FooterCell key={i} />
          ))}
        </Row>
      </tbody>
    </Sheet>
  );
};

const Browser = () => (
  <header>
    <TabStrip>
      {tabs.map(tab => (
        <Tab key={tab.title} $active={tab.active} $divider={tab.divider}>
          {tab.icon}
          <TabTitle $fade={tab.fade}>{tab.title}</TabTitle>
          <TabClose aria-label="Close tab"><CloseIcon /></TabClose>
        </Tab>
      ))}
      <NewTab aria-label="New tab"><MdAdd size={19} /></NewTab>
      <WindowControls>
        <WindowButton aria-label="Search tabs">
          <svg width="10" height="6" viewBox="0 0 10 6" fill="none" stroke="#111"><path d="M0 .5 5 5.500l5-5" /></svg>
        </WindowButton>
        <WindowButton aria-label="Minimise">
          <svg width="10" height="1" viewBox="0 0 10 1"><path d="M0 0h10v1H0z" /></svg>
        </WindowButton>
        <WindowButton aria-label="Restore">
          <svg width="10" height="10" viewBox="0 0 10 10" fill="none" stroke="#000">
            <path d="M.5 2.500h7v7h-7zM2.500 2.500v-2h7v7h-2" />
          </svg>
        </WindowButton>
        <WindowButton aria-label="Close window">
          <svg width="10" height="10" viewBox="0 0 10 10" fill="none" stroke="#000"><path d="m0 0 10 10M10 0 0 10" /></svg>
        </WindowButton>
      </WindowControls>
    </TabStrip>
    <NavBar>
      <NavButton disabled aria-label="Back"><MdArrowBack size={20} /></NavButton>
      <NavButton disabled aria-label="Forward"><MdArrowForward size={20} /></NavButton>
      <NavButton aria-label="Reload"><MdRefresh size={21} /></NavButton>
      <NavButton aria-label="Home"><HomeIcon /></NavButton>
      <AddressBar>
        <MdInfoOutline size={16} />
        <Scheme>File</Scheme>
        <AddressInput
          aria-label="Address"
          defaultValue="C:/Users/27730/Downloads/HPXS200-1-Jan-June2023-SA1-CMu-V2-24012023%20(2).pdf"
        />
        <AddressButton aria-label="Share"><ShareIcon /></AddressButton>
        <AddressButton aria-label="Bookmark this page"><MdStarBorder size={18} /></AddressButton>
      </AddressBar>
      <NavButton aria-label="Extensions"><MdExtension size={17} /></NavButton>
      <NavButton aria-label="Side panel"><SidePanelIcon /></NavButton>
      <NavButton aria-label="Profile"><Avatar /></NavButton>
      <NavButton aria-label="Browser menu"><MdMoreVert size={20} /></NavButton>
    </NavBar>
    <Bookmarks>
      {bookmarks.map(bookmark => (
        <Bookmark key={bookmark.label} href="#">
          {bookmark.icon}
          {bookmark.label}
        </Bookmark>
      ))}
    </Bookmarks>
  </header>
);

const PdfControls = () => (
  <PdfToolbar>
    <ToolbarStart>
      <ToolButton aria-label="Menu"><MdMenu size={22} /></ToolButton>
      <PdfTitle>HPXS200-1-Jan-June2023-SA1-CMu-V2-24012023 (2).pdf</PdfTitle>
    </ToolbarStart>
    <ToolbarCenter>
      <ToolInput aria-label="Page number" defaultValue="3" />
      <PageCount>{'/  4'}</PageCount>
      <ToolDivider />
      <ToolGroup>
        <ToolButton aria-label="Zoom out"><MdRemove size={20} /></ToolButton>
        <ToolInput $wide aria-label="Zoom level" defaultValue="100%" />
        <ToolButton aria-label="Zoom in"><MdAdd size={20} /></ToolButton>
      </ToolGroup>
      <ToolDivider />
      <ViewGroup>
        <ToolButton aria-label="Fit to page"><FitPageIcon /></ToolButton>
        <ToolButton aria-label="Rotate"><MdRotate90DegreesCcw size={19} /></ToolButton>
      </ViewGroup>
    </ToolbarCenter>
    <ToolbarEnd>
      <ToolButton aria-label="Download"><MdFileDownload size={20} /></ToolButton>
      <ToolButton aria-label="Print"><MdPrint size={20} /></ToolButton>
      <ToolButton aria-label="More"><MdMoreVert size={20} /></ToolButton>
    </ToolbarEnd>
  </PdfToolbar>
);

const SystemBar = () => (
  <Taskbar>
    <StartButton aria-label="Start"><WindowsLogo /></StartButton>
    <Search>
      <SearchIcon />
      <SearchInput aria-label="Search" placeholder="Type here to search" />
      <IslandBox><Island /></IslandBox>
    </Search>
    <TaskButton $width={50} aria-label="Task view"><TaskViewIcon /></TaskButton>
    {pinnedApps.map(app => (
      <TaskButton key={app.name} aria-label={app.name}>{app.icon}</TaskButton>
    ))}
    {otherApps.map(app => (
      <TaskButton key={app.name} $width={45} $state={app.state} aria-label={app.name}>{app.icon}</TaskButton>
    ))}
    <Tray>
      <Weather><NewsIcon />14°C</Weather>
      <TrayButton aria-label="Show hidden icons"><TrayUp /></TrayButton>
      <TrayButton aria-label="Meet now"><MeetIcon /></TrayButton>
      <TrayButton aria-label="OneDrive"><CloudIcon /></TrayButton>
      <TrayButton aria-label="OneDrive paused"><CloudPausedIcon /></TrayButton>
      <TrayButton aria-label="Battery"><BatteryIcon /></TrayButton>
      <TrayButton aria-label="Wi-Fi"><WifiIcon /></TrayButton>
      <TrayButton aria-label="Volume"><SpeakerIcon /></TrayButton>
      <TrayButton $width={32}>ENG</TrayButton>
      <Clock>22:35<br />2023/05/16</Clock>
      <NoticeButton aria-label="Notifications">
        <NoticeIcon />
        <NoticeCount>23</NoticeCount>
      </NoticeButton>
    </Tray>
  </Taskbar>
);

const App = () => {
  return (
    <Desktop>
      <GlobalStyle />
      <Browser />
      <PdfControls />
      <Viewer>
        <PageArea>
          <PdfPage>
            <PageHeading>Annexure G – Summative Assessment 1</PageHeading>
            <OrderTable />
          </PdfPage>
        </PageArea>
        <ScrollRail>
          <ScrollArrow aria-label="Scroll up"><Triangle /></ScrollArrow>
          <ScrollSpace $grow={290} />
          <ScrollThumb />
          <ScrollSpace $grow={170} />
          <ScrollArrow aria-label="Scroll down"><Triangle down /></ScrollArrow>
        </ScrollRail>
      </Viewer>
      <SystemBar />
    </Desktop>
  );
};

export default App;
